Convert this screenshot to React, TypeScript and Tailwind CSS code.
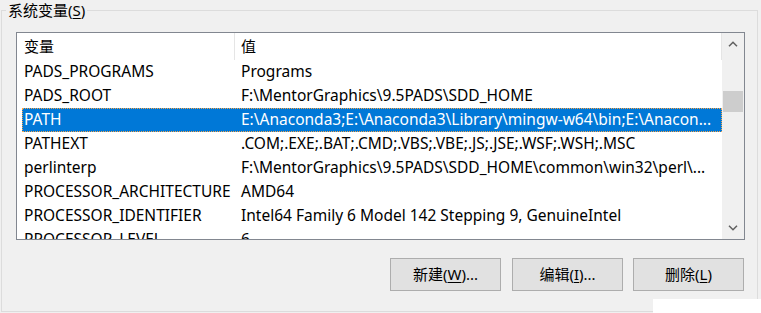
import { ReactNode } from 'react';

// rows of the system variables list
const rows: [string, string][] = [
  ['PADS_PROGRAMS', 'Programs'],
  ['PADS_ROOT', 'F:\\MentorGraphics\\9.5PADS\\SDD_HOME'],
  ['PATH', 'E:\\Anaconda3;E:\\Anaconda3\\Library\\mingw-w64\\bin;E:\\Anacon...'],
  ['PATHEXT', '.COM;.EXE;.BAT;.CMD;.VBS;.VBE;.JS;.JSE;.WSF;.WSH;.MSC'],
  ['perlinterp', 'F:\\MentorGraphics\\9.5PADS\\SDD_HOME\\common\\win32\\perl\\...'],
  ['PROCESSOR_ARCHITECTURE', 'AMD64'],
  ['PROCESSOR_IDENTIFIER', 'Intel64 Family 6 Model 142 Stepping 9, GenuineIntel'],
  ['PROCESSOR_LEVEL', '6'],
];

const selected = 'PATH';

function Chevron({ down }: { down?: boolean }) {
  return (
    <svg width="10" height="6" viewBox="0 0 10 6" className={down ? 'rotate-180' : ''}>
      <path d="M1 5.2 L5 1.2 L9 5.2" fill="none" stroke="#606060" strokeWidth="1.5" />
    </svg>
  );
}

function Button({ children, gap }: { children: ReactNode; gap: string }) {
  return (
    <div
      className={`flex h-[33px] w-[111px] items-center justify-center border border-[#adadad] bg-[#e1e1e1] text-[15px] text-black ${gap}`}
    >
      {children}
    </div>
  );
}

export default function App() {
  return (
    <div className="relative h-[313px] w-[761px] overflow-hidden bg-[#f0f0f0] font-['Noto_Sans','Noto_Sans_CJK_SC',sans-serif] text-black">
      {/* group box */}
      <div className="relative ml-[1px] mt-[10px] h-[302px] w-[757px] border border-[#dcdcdc]">
        <span className="absolute left-[4px] top-[-11px] bg-[#f0f0f0] px-[2px] text-[15px] leading-[20px]">
          系统变量(<span className="underline underline-offset-2">S</span>)
        </span>

        {/* list view */}
        <div className="ml-[14px] mt-[21px] flex h-[208px] w-[729px] border border-[#828790] bg-white">
          <div className="min-w-0 flex-1 overflow-hidden">
            <div className="flex h-[27px] text-[15px]">
              <div className="flex w-[218px] items-center border-r border-[#e5e5e5] pl-[7px]">变量</div>
              <div className="flex flex-1 items-center border-r border-[#e5e5e5] pl-[6px]">值</div>
            </div>
            {rows.map(([name, value]) => {
              const isSel = name === selected;
              return (
                <div
                  key={name}
                  className={`ml-[5px] flex h-[24px] w-[700px] items-center whitespace-nowrap text-[15.5px] ${
                    isSel
                      ? 'border border-dotted border-[#f7a54a] bg-[#0078d7] text-white'
                      : 'border border-transparent'
                  }`}
                >
                  <div className="w-[216px] shrink-0 pl-[1px]">{name}</div>
                  <div className="pl-[2px]">{value}</div>
                </div>
              );
            })}
          </div>

          {/* scrollbar */}
          <div className="flex w-[22px] shrink-0 flex-col bg-[#f0f0f0]">
            <div className="flex h-[22px] items-center justify-center">
              <Chevron />
            </div>
            <div className="flex-1">
              <div className="ml-[1px] mt-[36px] h-[21px] w-[20px] bg-[#cdcdcd]" />
            </div>
            <div className="flex h-[22px] items-center justify-center">
              <Chevron down />
            </div>
          </div>
        </div>

        {/* buttons */}
        <div className="ml-[388px] mt-[18px] flex">
          <Button gap="">
            新建(<span className="underline underline-offset-2">W</span>)...
          </Button>
          <Button gap="ml-[11px]">
            编辑(<span className="underline underline-offset-2">I</span>)...
          </Button>
          <Button gap="ml-[10px]">
            删除(<span className="underline underline-offset-2">L</span>)
          </Button>
        </div>
      </div>

      <div className="absolute bottom-0 right-0 h-[14px] w-[108px] bg-white" />
    </div>
  );
}
